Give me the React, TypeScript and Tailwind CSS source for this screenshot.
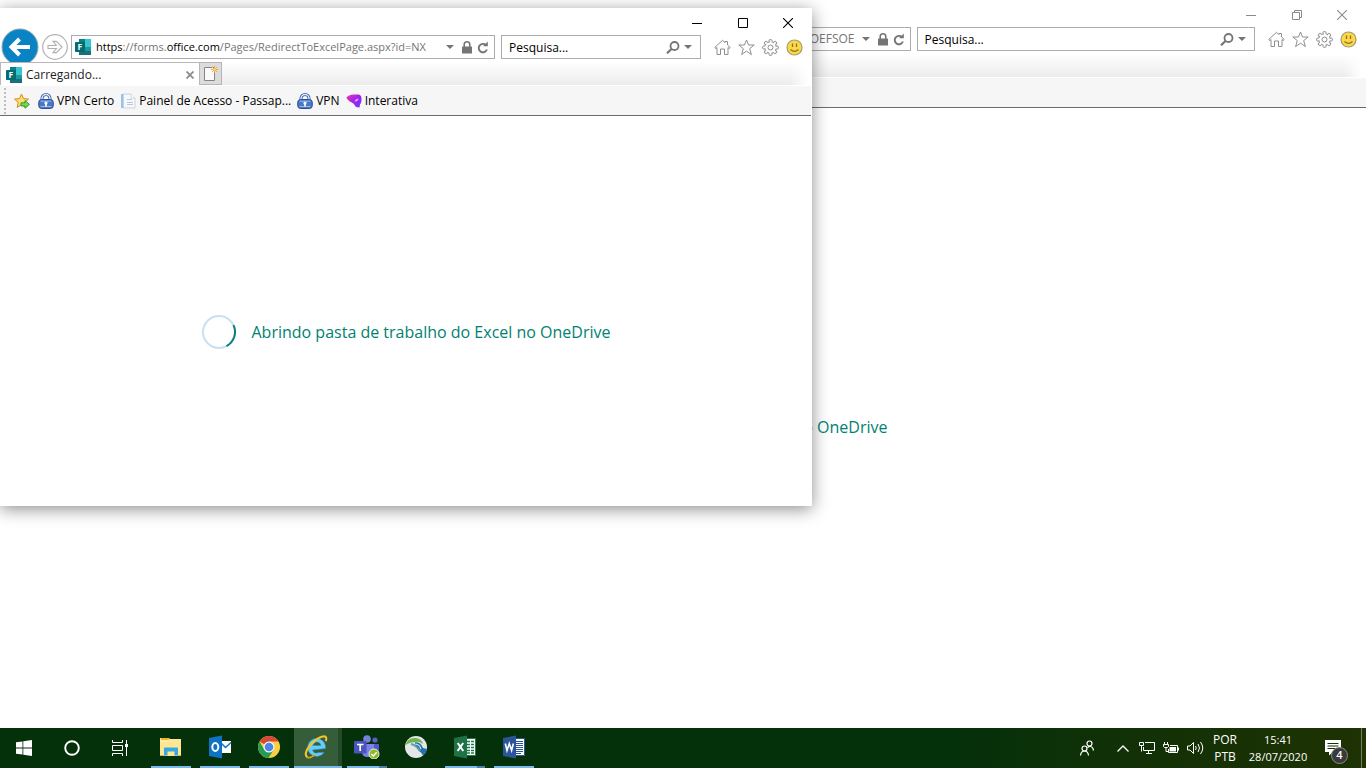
import type { ReactNode } from "react";

const uiFont = "font-['Open_Sans','Noto_Sans',sans-serif]";

/* ---------- browser icons ---------- */

function FormsIcon() {
  return (
    <svg viewBox="0 0 16 16" className="size-4 shrink-0" aria-hidden="true">
      <rect x="4" y="0" width="12" height="16" rx="1" fill="#1a9ba1" />
      <rect x="10" y="0" width="6" height="8" fill="#37c6d0" />
      <rect x="4" y="0" width="6" height="8" fill="#0b7f86" />
      <rect x="4" y="12" width="12" height="4" fill="#1c6f78" />
      <rect x="0" y="3" width="10" height="10" rx="0.8" fill="#036c70" />
      <text x="2.6" y="11.2" fontSize="8.5" fontWeight="700" fill="#fff" fontFamily="Open Sans">F</text>
    </svg>
  );
}

function BackArrow() {
  return (
    <svg viewBox="0 0 38 38" className="size-[38px]" aria-hidden="true">
      <circle cx="19" cy="19" r="18" fill="#0a83c4" stroke="#8aa4b2" strokeWidth="1" />
      <path d="M29 19H11.5M18.5 11l-8 8 8 8" fill="none" stroke="#fff" strokeWidth="4" />
    </svg>
  );
}

function ForwardArrow() {
  return (
    <svg viewBox="0 0 26 26" className="size-[26px]" aria-hidden="true">
      <circle cx="13" cy="13" r="12.3" fill="#fff" stroke="#b4b4b4" strokeWidth="1.2" />
      <path d="M6 11.500h8.400L11 7.400h3.400L20 13l-5.600 5.600H11l3.400-4.100H6z" fill="#fff" stroke="#b0b0b0" strokeWidth="1.100" />
    </svg>
  );
}

function Caret() {
  return (
    <svg viewBox="0 0 8 4" className="h-1 w-2" aria-hidden="true">
      <path d="M0 0h8L4 4z" fill="#757575" />
    </svg>
  );
}

function Lock() {
  return (
    <svg viewBox="0 0 10 13" className="h-[13px] w-[10px]" aria-hidden="true">
      <path d="M2.200 6V3.600a2.800 2.800 0 0 1 5.600 0V6" fill="none" stroke="#757575" strokeWidth="1.600" />
      <rect y="5.500" width="10" height="7" rx="0.600" fill="#757575" />
    </svg>
  );
}

function Refresh() {
  return (
    <svg viewBox="0 0 12 13" className="h-[13px] w-3" aria-hidden="true">
      <path d="M8.800 4A4.200 4.200 0 1 0 9.900 8.500" fill="none" stroke="#757575" strokeWidth="1.900" />
      <path d="M6 5.300h4.800V0.500z" fill="#757575" />
    </svg>
  );
}

function SearchIcon() {
  return (
    <svg viewBox="0 0 14 13" className="h-[13px] w-[14px]" aria-hidden="true">
      <circle cx="8.500" cy="5" r="4" fill="none" stroke="#757575" strokeWidth="1.800" />
      <path d="M5.500 8L1 12.300" stroke="#757575" strokeWidth="2.200" />
    </svg>
  );
}

function HomeIcon() {
  return (
    <svg viewBox="0 0 17 17" className="size-[17px]" fill="#fff" stroke="#8e8e8e" aria-hidden="true">
      <path d="M3 8.500L1.500 9.500.8 8.400 8.500 1.300 11 3.600V2.500h2.500v3.400l2.700 2.500-.7 1.100L14 8.500V15.500h-3.500V10h-4v5.500H3z" />
    </svg>
  );
}

function StarIcon() {
  return (
    <svg viewBox="0 0 17 17" className="size-[17px]" fill="#fff" stroke="#8e8e8e" aria-hidden="true">
      <path d="M8.500 1l2.100 5h5.600l-4.500 3.600 1.700 6-4.900-3.500-4.900 3.500 1.700-6L.8 6h5.600z" />
    </svg>
  );
}

function GearIcon() {
  const teeth = [0, 45, 90, 135, 180, 225, 270, 315];
  return (
    <svg viewBox="0 0 17 17" className="size-[17px]" aria-hidden="true">
      {teeth.map((a) => (
        <rect key={a} x="7" y="0.700" width="3" height="4" rx="0.800" fill="#fff" stroke="#8e8e8e" transform={`rotate(${a} 8.500 8.500)`} />
      ))}
      <circle cx="8.500" cy="8.500" r="5.500" fill="#fff" />
      <circle cx="8.500" cy="8.500" r="5.600" fill="none" stroke="#8e8e8e" strokeDasharray="1.500 2.900" strokeDashoffset="-1.450" />
      <circle cx="8.500" cy="8.500" r="2.500" fill="#fff" stroke="#8e8e8e" />
    </svg>
  );
}

function SmileIcon() {
  return (
    <svg viewBox="0 0 17 17" className="size-[17px]" aria-hidden="true">
      <circle cx="8.500" cy="8.500" r="7.500" fill="#fcd846" stroke="#a39a78" strokeWidth="1.200" />
      <path d="M6.500 4.500v3.500M10.500 4.500v3.500" stroke="#8b7424" strokeWidth="1.300" />
      <path d="M4.500 10.500q4 3.800 8 0" fill="none" stroke="#8b7424" strokeWidth="1.100" />
    </svg>
  );
}

function NewTabIcon() {
  return (
    <svg viewBox="0 0 14 15" className="h-[15px] w-[14px]" aria-hidden="true">
      <path d="M.5 1.500h10v13H.5z" fill="#fafafa" stroke="#858585" />
      <path d="M10.500 0v7M7 3.500h7M8 1l5 5M13 1L8 6" stroke="#eda63c" />
      <circle cx="10.500" cy="3.500" r="1.200" fill="#ffd98b" />
    </svg>
  );
}

function AddFavoriteIcon() {
  return (
    <svg viewBox="0 0 16 16" className="size-4" aria-hidden="true">
      <path d="M7.500 1l2 4.600 5 .5-3.800 3.300 1.100 5-4.300-2.600L3.200 14.400l1.100-5L.5 6.100l5-.5z" fill="#ffdf6b" stroke="#d08a1d" />
      <path d="M7 9.800h4V7.500l4.500 3.900L11 15.300V13H7z" fill="#75d653" stroke="#2f9427" strokeWidth="0.900" />
    </svg>
  );
}

function VpnIcon() {
  return (
    <svg viewBox="0 0 16 16" className="size-4 shrink-0" aria-hidden="true">
      <path d="M4 7V5.500a4 4 0 0 1 8 0V7" fill="none" stroke="#3159a8" strokeWidth="3" />
      <path d="M4 7V5.500a4 4 0 0 1 8 0V7" fill="none" stroke="#dfe8f8" strokeWidth="1.500" />
      <rect x="0.700" y="6.500" width="14.600" height="9" rx="3" fill="#4a76c4" stroke="#2a4f9d" />
      <path d="M2.500 8.200h11M2.500 13.500h11" stroke="#9db9e6" />
      <circle cx="8" cy="10" r="1.600" fill="#fff" />
      <path d="M7.200 10.500h1.600v3H7.200z" fill="#fff" />
    </svg>
  );
}

function DocumentIcon() {
  return (
    <svg viewBox="0 0 16 16" className="size-4 shrink-0" aria-hidden="true">
      <path d="M3 1h8l4 4v10H3z" fill="#f5f8fc" stroke="#cdd4de" />
      <path d="M11 1v4h4" fill="#fff" stroke="#cdd4de" />
      <path d="M1 1h2.500v14H1z" fill="#9ac3e6" />
      <path d="M7 6.500h5M7 9.500h6M7 11.500h6" stroke="#bcc6d4" />
    </svg>
  );
}

function InterativaIcon() {
  return (
    <svg viewBox="0 0 16 16" className="size-4 shrink-0" aria-hidden="true">
      <defs>
        <linearGradient id="interativa" x1="0" y1="0" x2="1" y2="1">
          <stop offset="0" stopColor="#f03ba5" />
          <stop offset="0.500" stopColor="#a020f0" />
          <stop offset="1" stopColor="#6a3cff" />
        </linearGradient>
      </defs>
      <path d="M.3 5Q2 1.500 8 1.500h4.500Q16 2 15.500 7q-.3 3.500-1.500 4.500l-.5 3-3.500-.5-2.500-3.500Q3 9 .3 5z" fill="url(#interativa)" />
      <path d="M8.500 8.500q3.500.5 4-3-3 0-4 3z" fill="#d9a8ff" />
    </svg>
  );
}

/* ---------- browser window ---------- */

type WindowProps = {
  active: boolean;
  address: ReactNode;
  favorites?: boolean;
  frame: string;
};

function BrowserWindow({ active, address, favorites = false, frame }: WindowProps) {
  const stroke = active ? "#000" : "#8a8a8a";
  return (
    <section className={`isolate flex flex-col bg-white ${frame}`}>
      <div className="flex h-[27px] shrink-0 justify-end pr-0.5">
        <button aria-label="Minimizar" className="flex w-[46px] items-center justify-center">
          <svg viewBox="0 0 10 10" className="mt-0.5 size-[10px]"><path d="M0 5.500h10" stroke={stroke} /></svg>
        </button>
        <button aria-label="Maximizar" className="flex w-[46px] items-center justify-center">
          <svg viewBox="0 0 10 10" className="mt-0.5 size-[10px]" fill="none" stroke={stroke}>
            {active ? <path d="M.5.5h9v9h-9z" /> : <path d="M.5 2.500h7v7h-7zM2.500 2.500v-2h7v7h-2" />}
          </svg>
        </button>
        <button aria-label="Fechar" className="flex w-11 items-center justify-center">
          <svg viewBox="0 0 10 10" className="mt-0.5 size-[10px]"><path d="M0 0l10 10M10 0L0 10" stroke={stroke} strokeWidth="1.100" /></svg>
        </button>
      </div>

      <div className="flex h-6 shrink-0 items-center">
        <button aria-label="Voltar" className="-my-2 ml-px shrink-0"><BackArrow /></button>
        <button aria-label="Avançar" className="ml-[3px] mr-[3px] shrink-0"><ForwardArrow /></button>
        <div className="flex h-6 min-w-0 shrink-0 grow-[3] basis-[424px] items-center border border-[#acacac] px-[3px]">
          <FormsIcon />
          <div
            role="textbox"
            aria-label="Endereço"
            contentEditable
            suppressContentEditableWarning
            className={`ml-[5px] flex h-5 w-0 grow items-center overflow-hidden whitespace-pre text-[#757575] outline-none ${active ? "text-[11px]" : "justify-end text-[12px]"}`}
          >
            {address}
          </div>
          <button aria-label="Mostrar endereços" className="flex w-[22px] justify-center"><Caret /></button>
          <span className="flex w-3 justify-center"><Lock /></span>
          <button aria-label="Atualizar" className="ml-0.5 flex w-4 justify-center"><Refresh /></button>
        </div>
        <div className="ml-1.5 flex h-6 min-w-0 shrink-0 grow basis-[200px] items-center border border-[#acacac] pl-[7px] pr-2">
          <input
            aria-label="Pesquisa"
            defaultValue="Pesquisa..."
            className="h-5 w-0 grow bg-transparent text-[12px] text-black outline-none"
          />
          <button aria-label="Pesquisar"><SearchIcon /></button>
          <button aria-label="Opções de pesquisa" className="ml-1 flex h-5 items-center"><Caret /></button>
        </div>
        <nav className="ml-[9px] mr-1.5 flex shrink-0" aria-label="Ferramentas">
          <button aria-label="Página inicial" className="flex w-6 justify-center"><HomeIcon /></button>
          <button aria-label="Favoritos" className="flex w-6 justify-center"><StarIcon /></button>
          <button aria-label="Configurações" className="flex w-6 justify-center"><GearIcon /></button>
          <button aria-label="Enviar um sorriso" className="flex w-6 justify-center"><SmileIcon /></button>
        </nav>
      </div>

      <div className="relative z-10 mt-[3px] flex h-[23px] shrink-0">
        <div className="flex w-[200px] items-center border border-b-0 border-[#b8b8b8] bg-white px-[5px] pt-0.5">
          <FormsIcon />
          <span className="ml-1 grow text-[12px] text-[#1b1b1b]">Carregando...</span>
          <button aria-label="Fechar guia">
            <svg viewBox="0 0 8 8" className="size-2"><path d="M.5.5l7 7M7.500.5l-7 7" stroke="#8c8c8c" strokeWidth="1.800" /></svg>
          </button>
        </div>
        <button aria-label="Nova guia" className="flex w-[22px] items-center justify-center border border-l-0 border-[#b5b5b5] bg-[#dcdcdc]">
          <NewTabIcon />
        </button>
        <div className="grow bg-linear-to-b from-white to-[#ececec] [mask-image:linear-gradient(to_left,transparent_4px,black_22px)]" />
      </div>

      <div className={`flex h-[31px] shrink-0 items-center gap-1.5 border-b border-t border-b-[#6b6b6b] border-t-white bg-[#f6f6f6] pl-[4px] text-[12px] text-black ${active ? "mr-px" : ""}`}>
        {favorites && (
          <>
            <span className="mr-0.5 h-[26px] w-0.5 border-l-2 border-dotted border-[#bdbdbd]" />
            <button aria-label="Adicionar aos favoritos" className="mr-0.5"><AddFavoriteIcon /></button>
            <a href="#vpn-certo" className="flex items-center gap-[3px]"><VpnIcon />VPN Certo</a>
            <a href="#painel" className="flex items-center gap-[3px]"><DocumentIcon />Painel de Acesso - Passap...</a>
            <a href="#vpn" className="flex items-center gap-[3px]"><VpnIcon />VPN</a>
            <a href="#interativa" className="flex items-center gap-[3px]"><InterativaIcon />Interativa</a>
          </>
        )}
      </div>

      <main className="flex min-h-0 grow flex-col items-center">
        <div className="h-[45%] shrink-0" />
        <div className="flex items-center gap-4 pt-[23px]" role="status">
          <svg viewBox="0 0 34 34" className="size-[34px]" fill="none" strokeWidth="2" aria-hidden="true">
            <circle cx="17" cy="17" r="16" stroke="#c7e0f4" />
            <path d="M31.500 10.200A16 16 0 0 1 24.500 31.100" stroke="#0a8272" />
          </svg>
          <span className="whitespace-nowrap text-[16px] leading-6 text-[#008272]">
            Abrindo pasta de trabalho do Excel no OneDrive
          </span>
        </div>
      </main>
    </section>
  );
}

/* ---------- taskbar icons ---------- */

function WindowsIcon() {
  return (
    <svg viewBox="0 0 16 16" className="size-4" fill="#fff" aria-hidden="true">
      <path d="M0 2.300L6.500 1.400V7.600H0zM7.300 1.300L16 0v7.600H7.300zM0 8.400h6.500v6.200L0 13.700zM7.300 8.400H16V16l-8.700-1.300z" />
    </svg>
  );
}

function TaskViewIcon() {
  return (
    <svg viewBox="0 0 16 16" className="size-4" fill="none" stroke="#fff" aria-hidden="true">
      <path d="M.5 0v2.500h10V0M.5 5.500h10v5H.5zM.5 16v-2.500h10V16M14.500 0v16" />
      <path d="M13 4h3v3h-3z" fill="#fff" stroke="none" />
    </svg>
  );
}

function ExplorerIcon() {
  return (
    <svg viewBox="0 0 24 20" className="h-5 w-6" aria-hidden="true">
      <path d="M1 1h9l1 1h11v17H1z" fill="#ffe695" />
      <path d="M2 1h8v2H2z" fill="#f5b51f" />
      <path d="M1 4h10" stroke="#fff2c0" />
      <path d="M5 18.500v-8h14v8h-3.500v-4h-7v4z" fill="#35a8e0" />
      <path d="M1 18.500h4M19 18.500h3" stroke="#d9b84b" />
    </svg>
  );
}

function OutlookIcon() {
  return (
    <svg viewBox="0 0 24 24" className="size-6" aria-hidden="true">
      <path d="M13 6h10v12H13z" fill="#fff" />
      <path d="M13 8l4.500 4.500L23 7.500" fill="none" stroke="#0f74c6" strokeWidth="1.500" />
      <path d="M1 3l13-2.500v23L1 21z" fill="#0f72c4" />
      <ellipse cx="7.300" cy="12" rx="3" ry="3.900" fill="none" stroke="#fff" strokeWidth="2" />
    </svg>
  );
}

function ChromeIcon() {
  return (
    <svg viewBox="0 0 24 24" className="size-6" aria-hidden="true">
      <circle cx="12" cy="12" r="11" fill="#fbcf45" />
      <path d="M12 12L2.500 6.500A11 11 0 0 1 21.500 6.500H12z" fill="#d8483a" />
      <path d="M2.500 6.500A11 11 0 0 0 11.500 23L16.700 14.800 12 12 7.300 14.700z" fill="#279a55" />
      <circle cx="12" cy="12" r="5.500" fill="#f5f5f5" />
      <circle cx="12" cy="12" r="4.300" fill="#4a86e8" />
    </svg>
  );
}

function ExplorerBrowserIcon() {
  return (
    <svg viewBox="0 0 24 24" className="size-6" aria-hidden="true">
      <path d="M21.500 13.500A8.900 9 0 1 0 20 17.500h-5.500q-4.500 2-6-2.500zM8.700 10.500q1.300-3.500 4.200-3.500 3.300 0 4 3.500z" fill="#68cdf5" fillRule="evenodd" stroke="#2b8fc9" strokeWidth="0.600" />
      <path d="M3.500 22.500Q-1 19 6 10.500 14 1.500 20 1.200q3.500.3 1.800 5" fill="none" stroke="#f5c529" strokeWidth="2" />
      <path d="M3.500 22.500q3 1.200 7.500-3" fill="none" stroke="#e3a817" strokeWidth="1.500" />
    </svg>
  );
}

function TeamsIcon() {
  return (
    <svg viewBox="0 0 26 24" className="h-6 w-[26px]" aria-hidden="true">
      <circle cx="13" cy="4" r="3.800" fill="#7780dd" />
      <circle cx="21" cy="5" r="2.600" fill="#5b62c4" />
      <path d="M17 9h8v7q-1 4-5 4h-3z" fill="#5059c9" />
      <path d="M8 9h12v7q-1 6-6.500 6T8 17z" fill="#7b83eb" />
      <rect x="0" y="6" width="12.500" height="12.500" rx="1" fill="#4b53bc" />
      <path d="M3 9.500h6.500M6.200 9.500v6.500" stroke="#fff" strokeWidth="1.700" />
      <circle cx="20" cy="19" r="5" fill="#8dbb25" stroke="#e9f2d0" />
      <path d="M17.300 19l2 2 3.400-3.800" fill="none" stroke="#fff" strokeWidth="1.500" />
    </svg>
  );
}

function AnyConnectIcon() {
  return (
    <svg viewBox="0 0 24 24" className="size-6" aria-hidden="true">
      <circle cx="12" cy="12" r="11" fill="#e4e7e8" />
      <path d="M1.500 10Q4 2 12 3q6 1 7 6-4-3-8-2-5 0-9.500 3z" fill="#72b34c" />
      <path d="M11 7q6 0 8 6l4 1q-1 4-4 6.500l-2-3q-5-3-6-10.500z" fill="#256fb0" />
      <path d="M7 9q5 1 9 7" fill="none" stroke="#5ba3a0" strokeWidth="2" />
      <path d="M12 9q4 1 5 5" fill="none" stroke="#cfe3ee" strokeWidth="1.200" />
    </svg>
  );
}

function ExcelIcon() {
  return (
    <svg viewBox="0 0 24 24" className="size-6" aria-hidden="true">
      <path d="M12 3.500h10.500v17H12z" fill="#fff" stroke="#1f7a49" />
      <path d="M14 6.500h3M14 9.500h3M14 12.500h3M14 15.500h3M14 18h3M18 6.500h3M18 9.500h3M18 12.500h3M18 15.500h3M18 18h3" stroke="#1f7a49" strokeWidth="1.500" />
      <path d="M1 3l13-2.500v23L1 21z" fill="#1e7245" />
      <path d="M4.700 8l5.600 8M10.200 8l-5.600 8" stroke="#fff" strokeWidth="2" />
    </svg>
  );
}

function WordIcon() {
  return (
    <svg viewBox="0 0 24 24" className="size-6" aria-hidden="true">
      <path d="M12 3.500h10.500v17H12z" fill="#fff" stroke="#2a5699" />
      <path d="M14 6.500h7M14 8.500h7M14 10.500h7M14 12.500h7M14 14.500h7M14 16.500h7M14 18.500h5" stroke="#2a5699" />
      <path d="M1 3l13-2.500v23L1 21z" fill="#2a5699" />
      <path d="M3.300 8.500l1.700 7 2.300-7 2.300 7 1.800-7" fill="none" stroke="#fff" strokeWidth="1.600" />
    </svg>
  );
}

type Task = { label: string; icon: ReactNode; state: "open" | "stacked" | "active" | "idle" };

const tasks: Task[] = [
  { label: "Explorador de Arquivos", icon: <ExplorerIcon />, state: "open" },
  { label: "Outlook", icon: <OutlookIcon />, state: "open" },
  { label: "Google Chrome", icon: <ChromeIcon />, state: "open" },
  { label: "Internet Explorer", icon: <ExplorerBrowserIcon />, state: "active" },
  { label: "Microsoft Teams", icon: <TeamsIcon />, state: "stacked" },
  { label: "Cisco AnyConnect", icon: <AnyConnectIcon />, state: "idle" },
  { label: "Excel", icon: <ExcelIcon />, state: "stacked" },
  { label: "Word", icon: <WordIcon />, state: "open" },
];

function TaskButton({ label, icon, state }: Task) {
  return (
    <button aria-label={label} className="flex w-[49px] flex-col items-center">
      <span className={`flex h-[38px] items-center justify-center ${state === "active" ? "w-12 border-r-4 border-[#244a29] bg-[#365d3a]" : "w-10"}`}>
        {icon}
      </span>
      {state === "active" && <span className="h-0.5 w-12 bg-[#76b9ed]" />}
      {state === "open" && <span className="h-0.5 w-10 bg-[#76b9ed]" />}
      {state === "stacked" && <span className="h-0.5 w-10 border-r-8 border-[#4c80ac] bg-[#76b9ed]" />}
    </button>
  );
}

function Taskbar() {
  return (
    <footer className="flex h-10 shrink-0 bg-linear-to-r from-[#04300a] via-[#04300a] via-70% to-[#1e3202] text-white">
      <button aria-label="Iniciar" className="flex w-12 items-center justify-center"><WindowsIcon /></button>
      <button aria-label="Cortana" className="flex w-12 items-center justify-center">
        <svg viewBox="0 0 16 16" className="size-4"><circle cx="8" cy="8" r="6.800" fill="none" stroke="#fff" strokeWidth="1.900" /></svg>
      </button>
      <button aria-label="Visão de tarefas" className="mr-[2px] flex w-12 items-center justify-center"><TaskViewIcon /></button>
      {tasks.map((task) => <TaskButton key={task.label} {...task} />)}

      <div className="ml-auto flex items-center text-[12px]">
        <button aria-label="Pessoas" className="mr-4">
          <svg viewBox="0 0 16 16" className="size-4" fill="none" stroke="#fff" strokeWidth="1.200">
            <circle cx="10.500" cy="3.500" r="2.500" />
            <path d="M8.500 7.500q3.500-2.500 5.500 1l.5 2" />
            <circle cx="5.500" cy="8.500" r="2.500" />
            <path d="M1.500 15.500q.5-4.500 4-4.500t4 4.500" />
          </svg>
        </button>
        <button aria-label="Mostrar ícones ocultos" className="flex w-6 justify-center">
          <svg viewBox="0 0 12 7" className="h-[7px] w-3"><path d="M.5 6.500L6 1l5.500 5.500" fill="none" stroke="#fff" strokeWidth="1.300" /></svg>
        </button>
        <button aria-label="Rede" className="flex w-6 justify-center">
          <svg viewBox="0 0 16 14" className="h-3.5 w-4" fill="none" stroke="#fff">
            <path d="M6 1.500h9.500v8H4.500V6M9.500 9.500v3M7 12.500h6M.5 1.500h4v3h-4zM2.500 4.500v6" />
          </svg>
        </button>
        <button aria-label="Bateria" className="flex w-6 justify-center">
          <svg viewBox="0 0 16 13" className="h-[13px] w-4" fill="none" stroke="#fff">
            <path d="M1.500 0v2M4.500 0v2M.5 2.500h5v2l-1 1h-3l-1-1zM3 5.500v4h2M7 3.500h7.500v7h-9V7M15.500 5.500v3" />
            <path d="M6.500 5H13v4.500H6.500z" fill="#fff" stroke="none" />
          </svg>
        </button>
        <button aria-label="Volume" className="flex w-6 justify-center">
          <svg viewBox="0 0 17 14" className="h-3.5 w-[17px]" fill="none" stroke="#fff">
            <path d="M.5 5h2.500l3.500-3.500v11L3 9H.5zM8.500 5q1.500 2 0 4M11 3q3 4 0 8M13.500 1q4.500 6 0 12" />
          </svg>
        </button>
        <button className="ml-1 w-7 text-center leading-[17px]">POR<br />PTB</button>
        <button className="ml-2 w-[62px] whitespace-nowrap text-center text-[11px] leading-[17px]">15:41<br />28/07/2020</button>
        <button aria-label="Notificações" className="relative ml-3 h-10 w-8">
          <svg viewBox="0 0 16 16" className="ml-1 size-4"><path d="M0 0h16v12H8l-4 3.500V12H0z" fill="#fff" /><path d="M2.500 3.500h11M2.500 6h11M2.500 8.500h8" stroke="#1a3104" /></svg>
          <span className="absolute left-2.5 top-[19px] flex size-[17px] items-center justify-center rounded-full border border-[#8b8b8b] bg-[#3a3a3a] text-[11px] font-semibold">4</span>
        </button>
        <button aria-label="Mostrar área de trabalho" className="ml-2 h-10 w-[5px] border-l border-[#74805f]" />
      </div>
    </footer>
  );
}

export default function App() {
  return (
    <div className={`relative flex h-screen flex-col overflow-hidden bg-white ${uiFont}`}>
      <BrowserWindow active={false} frame="min-h-0 grow" address="hYjJxOEFSOE" />
      <div className="absolute left-0 top-2 z-20">
        <BrowserWindow
          active
          favorites
          frame="h-[498px] w-[812px] shadow-[0_3px_16px_rgba(0,0,0,0.45)]"
          address={
            <span>
              <span className="text-black">https</span>://forms.<span className="text-black">office.com</span>
              /Pages/RedirectToExcelPage.aspx?id=NX
            </span>
          }
        />
      </div>
      <Taskbar />
    </div>
  );
}
